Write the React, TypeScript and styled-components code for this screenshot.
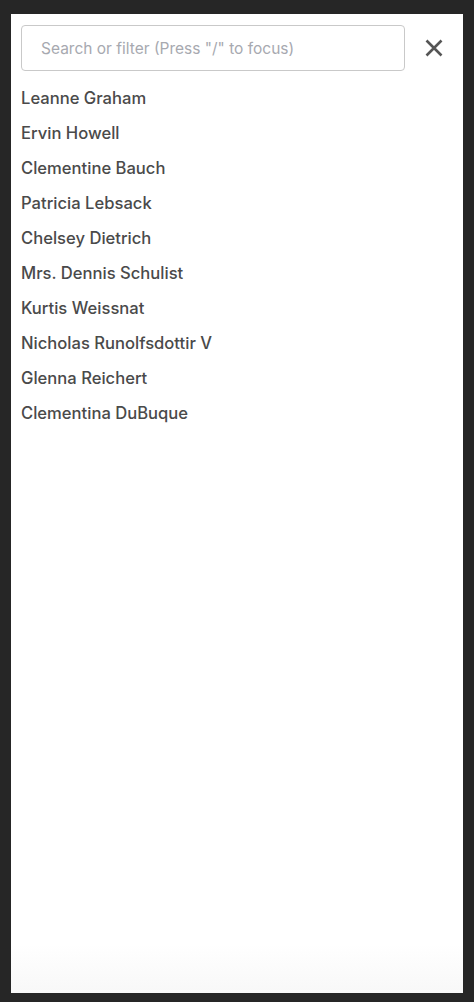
import React, { useState } from 'react';
import styled, { createGlobalStyle } from 'styled-components';

const GlobalStyle = createGlobalStyle`
  html, body {
    margin: 0;
    padding: 0;
    background: #262626;
  }
  body {
    font-family: Inter, "Open Sans", sans-serif;
  }
`;

const Page = styled.div`
  box-sizing: border-box;
  height: 1002px;
  padding: 14px 11px 9px 11px;
  display: flex;
`;

const Panel = styled.div`
  flex: 1;
  background: linear-gradient(to bottom, #ffffff 0%, #ffffff 95%, #f8f8f8 100%);
  padding: 11px 10px;
  display: flex;
  flex-direction: column;
`;

const SearchRow = styled.div`
  display: flex;
  align-items: center;
  gap: 20px;
`;

const SearchInput = styled.input`
  box-sizing: border-box;
  flex: 1;
  height: 46px;
  border: 1px solid #c9c9c9;
  border-radius: 4px;
  padding: 0 19px;
  font-family: Inter, "Open Sans", sans-serif;
  font-size: 15.5px;
  color: #444;
  outline: none;

  &::placeholder {
    color: #a7a9b0;
  }
`;

const CloseButton = styled.button`
  width: 18px;
  height: 18px;
  padding: 0;
  margin-right: 10px;
  border: none;
  background: none;
  display: flex;
  cursor: pointer;
`;

const List = styled.ul`
  list-style: none;
  margin: 10px 0 0 0;
  padding: 0;
`;

const Item = styled.li`
  height: 35px;
  line-height: 35px;
  font-size: 16.6px;
  font-weight: 500;
  color: #4a4a4a;
`;

const users = [
  'Leanne Graham',
  'Ervin Howell',
  'Clementine Bauch',
  'Patricia Lebsack',
  'Chelsey Dietrich',
  'Mrs. Dennis Schulist',
  'Kurtis Weissnat',
  'Nicholas Runolfsdottir V',
  'Glenna Reichert',
  'Clementina DuBuque',
];

export default function App() {
  const [query, setQuery] = useState('');
  const shown = users.filter((u) => u.toLowerCase().includes(query.toLowerCase()));

  return <>
    <GlobalStyle />
    <Page>
      <Panel>
        <SearchRow>
          <SearchInput
            placeholder={'Search or filter (Press "/" to focus)'}
            value={query}
            onChange={(e) => setQuery(e.currentTarget.value)}
          />
          <CloseButton aria-label="Close">
            <svg width="18" height="18" viewBox="0 0 18 18">
              <path d="M1.5 1.5 L16.5 16.5 M16.5 1.5 L1.5 16.5" stroke="#555" strokeWidth="2.6" />
            </svg>
          </CloseButton>
        </SearchRow>
        <List>
          {shown.map((u) => <Item key={u}>{u}</Item>)}
        </List>
      </Panel>
    </Page>
  </>;
}
